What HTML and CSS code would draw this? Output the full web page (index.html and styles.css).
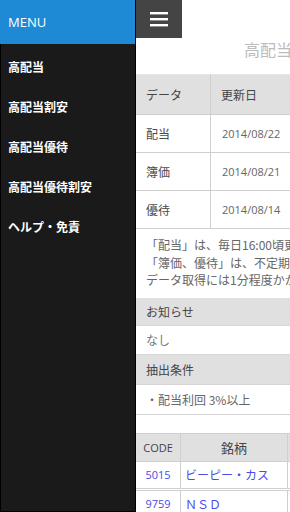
FILE: index.html
```html
<!DOCTYPE html>
<html>

<head>
    <meta name="viewport" content="width=device-width, initial-scale=1.0">
    <title>高配当株</title>
    <link rel="stylesheet" href="styles.css">
</head>

<body>
    <nav class="side-menu">
        <div class="menu-head">MENU</div>
        <ul class="menu-list">
            <li>高配当</li>
            <li>高配当割安</li>
            <li>高配当優待</li>
            <li>高配当優待割安</li>
            <li>ヘルプ・免責</li>
        </ul>
    </nav>

    <main class="page">
        <div class="top-bar">
            <button class="menu-button">
                <svg width="18" height="16" viewBox="0 0 18 16">
                    <rect x="0" y="1" width="18" height="2.4" fill="#fff" />
                    <rect x="0" y="7" width="18" height="2.4" fill="#fff" />
                    <rect x="0" y="13" width="18" height="2.4" fill="#fff" />
                </svg>
            </button>
        </div>

        <h1 class="page-title">高配当株</h1>

        <table class="update-table">
            <tr>
                <th class="col-name">データ</th>
                <th>更新日</th>
                <th>件数</th>
            </tr>
            <tr>
                <td>配当</td>
                <td class="date">2014/08/22</td>
                <td class="date">3120</td>
            </tr>
            <tr>
                <td>簿価</td>
                <td class="date">2014/08/21</td>
                <td class="date">3120</td>
            </tr>
            <tr>
                <td>優待</td>
                <td class="date">2014/08/14</td>
                <td class="date">1280</td>
            </tr>
        </table>

        <p class="note">
            「配当」は、毎日16:00頃更新されます。<br>
            「簿価、優待」は、不定期に更新されます。<br>
            データ取得には1分程度かかります。
        </p>

        <ul class="info-list">
            <li class="info-head">お知らせ</li>
            <li class="info-body">なし</li>
        </ul>

        <ul class="info-list tall">
            <li class="info-head">抽出条件</li>
            <li class="info-body dark">・配当利回 3%以上</li>
        </ul>

        <table class="stock-table">
            <tr>
                <th class="code">CODE</th>
                <th class="name">銘柄</th>
                <th>利回</th>
            </tr>
            <tr>
                <td class="code"><a href="#">5015</a></td>
                <td class="name"><a href="#">ビーピー・カス</a></td>
                <td>4.12%</td>
            </tr>
            <tr>
                <td class="code"><a href="#">9759</a></td>
                <td class="name"><a href="#">ＮＳＤ</a></td>
                <td>3.85%</td>
            </tr>
        </table>
    </main>
</body>

</html>
```

FILE: styles.css
```css
:root {
    --menu-blue: #1e8ad6;
    --menu-bg: #1a1a1a;
    --head-gray: #e0e0e0;
    --line-color: #cfcfcf;
    --text-color: #4a4a4a;
    --link-color: #4b4be6;
}

html,
body {
    margin: 0;
    padding: 0;
}

body {
    display: flex;
    width: 290px;
    height: 512px;
    overflow: hidden;
    font-family: "Noto Sans CJK JP", "Open Sans", sans-serif;
    background-color: #fff;
    color: var(--text-color);
}

.side-menu {
    flex-shrink: 0;
    width: 134px;
    height: 511px;
    background-color: var(--menu-bg);
    border-left: 1px solid #000;
    border-right: 1px solid #000;
    border-bottom: 1px solid #000;
}

.menu-head {
    height: 44px;
    line-height: 44px;
    padding-left: 8px;
    margin-left: -1px;
    background-color: var(--menu-blue);
    color: #fff;
    font-family: "Open Sans", sans-serif;
    font-size: 13px;
}

.menu-list {
    list-style: none;
    margin: 0;
    padding: 3px 0 0 0;
}

.menu-list li {
    height: 40px;
    line-height: 40px;
    padding-left: 7px;
    color: #fff;
    font-size: 12px;
    font-weight: bold;
}

.page {
    flex-shrink: 0;
    width: 290px;
}

.top-bar {
    height: 38px;
}

.menu-button {
    width: 46px;
    height: 38px;
    padding: 0;
    border: none;
    background-color: #444;
    display: flex;
    align-items: center;
    justify-content: center;
}

.page-title {
    margin: 0 0 14px 0;
    padding-right: 10px;
    height: 22px;
    line-height: 22px;
    text-align: center;
    font-size: 16px;
    font-weight: normal;
    color: #bbb;
}

.update-table {
    width: 100%;
    border-collapse: collapse;
    font-size: 12px;
}

.update-table th,
.update-table td {
    border: 1px solid var(--line-color);
    padding: 0 10px;
    text-align: left;
    font-weight: normal;
    height: 37px;
}

.update-table th {
    height: 39px;
    background-color: var(--head-gray);
    border-top-color: #e6e6e6;
    font-size: 12px;
    color: #444;
}

.update-table th:first-child,
.update-table td:first-child {
    border-left: none;
}

.update-table .col-name {
    width: 54px;
}

.update-table .date {
    padding-left: 11px;
    font-family: "Open Sans", sans-serif;
    font-size: 11px;
    color: #666;
}

.note {
    margin: 0;
    padding: 7px 10px 0 10px;
    font-size: 12px;
    line-height: 17.5px;
    color: #666;
}

.info-list {
    list-style: none;
    margin: 9px 0 0 0;
    padding: 0;
}

.info-list li {
    padding-left: 10px;
    border-bottom: 1px solid #d6d6d6;
    font-size: 12px;
}

.info-head {
    height: 27px;
    line-height: 27px;
    background-color: var(--head-gray);
    color: #444;
}

.info-body {
    height: 28px;
    line-height: 28px;
    color: #777;
}

.info-body.dark {
    color: #666;
}

.info-list.tall {
    margin-top: 0;
}

.info-list.tall li {
    height: 29px;
    line-height: 29px;
}

.stock-table {
    margin-top: 18px;
    border-collapse: collapse;
    font-size: 12px;
}

.stock-table th,
.stock-table td {
    border: 1px solid var(--line-color);
    font-weight: normal;
    padding: 0 4px;
}

.stock-table th {
    height: 27px;
    background-color: var(--head-gray);
    color: #444;
}

.stock-table td {
    height: 26px;
    border-bottom: 3px double var(--line-color);
}

.stock-table th:first-child,
.stock-table td:first-child {
    border-left: none;
}

.stock-table .code {
    width: 36px;
    text-align: center;
    font-family: "Open Sans", sans-serif;
    font-size: 11px;
}

.stock-table .name {
    width: 98px;
    text-align: left;
}

.stock-table th.name {
    text-align: center;
    font-size: 13px;
}

.stock-table a {
    color: var(--link-color);
    text-decoration: none;
}

.stock-table .name a {
    font-size: 12px;
}
```
